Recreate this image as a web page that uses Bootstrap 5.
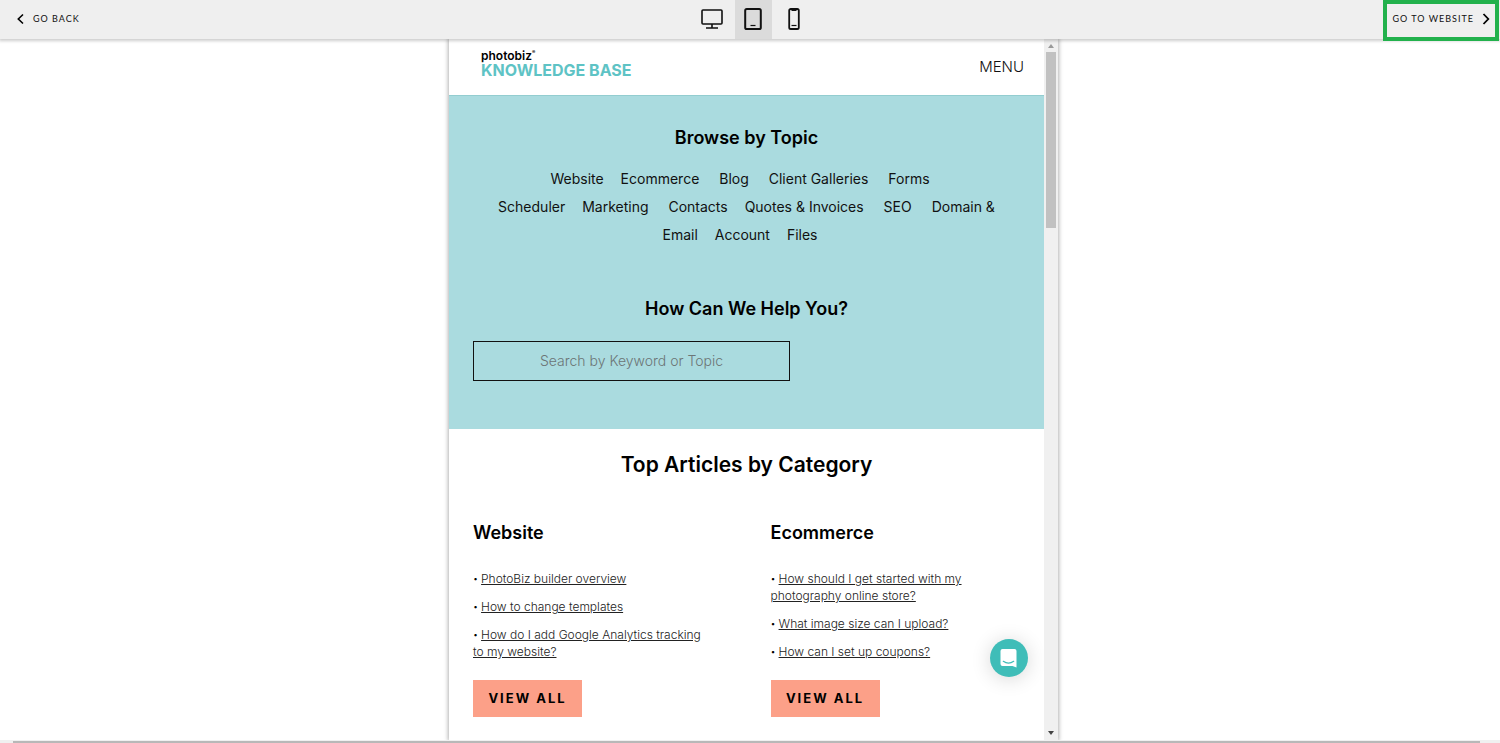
<!DOCTYPE html>
<html lang="en">
<head>
<meta charset="utf-8">
<meta name="viewport" content="width=device-width, initial-scale=1">
<title>Website preview</title>
<link rel="stylesheet" href="https://cdn.jsdelivr.net/npm/bootstrap@5.3.0/dist/css/bootstrap.min.css">
<style>
body { font-family: Inter, "Liberation Sans", sans-serif; color: #000; background: #fff; }
svg { display: block; }
.topbar { height: 39px; padding-left: 6px; background: #efefef; box-shadow: 0 1px 3px 1px rgba(0,0,0,.2); z-index: 5; }
.side-link { font: 400 9px/14px Lato, sans-serif; letter-spacing: 1px; color: #111; text-decoration: none; }
.back-link { padding: 0 0 2px 10px; }
.site-link { top: 0; right: 1px; height: 41px; border: 4px solid #22b14c; padding: 0 5px 4px 6px; }
.devices { gap: 4px; }
.device { width: 37px; height: 39px; border: 0; padding: 0 0 1px; background: none; }
.device.current { background: #dbdbdb; }
.stage { padding-left: 7px; }
.frame { width: 100%; max-width: 609px; box-shadow: 0 0 4px 1px rgba(0,0,0,.3); background: #fff; }
.site-head { height: 57px; padding: 0 20px 0 32px; border-bottom: 1px solid #93cdd0; }
.logo { color: #5ec3c5; text-decoration: none; padding-bottom: 7px; }
.logo-top { font: 600 12px/14px Inter, sans-serif; color: #000; }
.logo-top sup { font-size: 5px; top: -6px; }
.logo-main { font: 700 16px/15px Inter, sans-serif; }
.menu-btn { border: 0; background: none; padding: 0; font: 300 15px/20px Inter, sans-serif; color: #111; }
.hero { background: #aadbdf; padding: 28px 24px 48px; }
h2 { font-size: 18px; line-height: 28px; font-weight: 600; margin: 0; }
.topics { font-size: 14px; line-height: 28px; margin: 13px 0 46px; }
.topics a { color: #111; text-decoration: none; margin-right: 13px; }
.topics a.wide { margin-right: 16px; }
.search { width: 317px; height: 40px; margin-top: 18px; padding: 0 0 2px; border: 1px solid #111; background: none; text-align: center; font-size: 14px; font-weight: 300; }
.search::placeholder { color: #6c7576; }
.articles { padding: 21px 0; }
.articles h1 { font-size: 21px; line-height: 30px; font-weight: 600; margin: 0 0 39px; }
.topic-col { padding: 0 24px; }
.topic-col ul { font-size: 12px; line-height: 17px; font-weight: 300; margin: 23px 0 20px; padding-right: 12px; }
.topic-col li { margin-bottom: 11px; }
.topic-col li::before { content: "•"; font-size: 9px; line-height: 1; vertical-align: 1px; margin-right: 3px; }
.topic-col li a { color: #222; }
.view-btn { width: 109px; height: 37px; background: #fca088; border: 0; padding: 0; font-size: 13px; font-weight: 700; letter-spacing: 2px; color: #000; }
.track { width: 14px; background: #f0f0f0; padding: 5px 2px; }
.thumb { width: 10px; height: 176px; background: #c1c1c1; margin-top: 4px; }
.chat { right: 16px; bottom: 63px; width: 38px; height: 38px; border: 0; border-radius: 50%; background: #3fbdb8; box-shadow: 0 2px 20px rgba(0,0,0,.16); padding: 0; }
.page-scroll { height: 3px; background: #f0f0f0; padding: 1px 20px 0 13px; }
.page-scroll div { height: 2px; background: #b8b8b8; }
</style>
</head>
<body class="vh-100 d-flex flex-column overflow-hidden">
<header class="topbar position-relative d-flex align-items-center justify-content-center flex-shrink-0">
  <a href="#" class="side-link back-link me-auto d-flex align-items-center gap-2 w-25">
    <svg width="9" height="12" viewBox="0 0 9 12" fill="none" stroke="#000" stroke-width="1.6"><path d="M7 1.5 2.3 6 7 10.5"/></svg>GO BACK
  </a>
  <nav class="devices d-flex" aria-label="Preview device">
    <button class="device d-flex align-items-center justify-content-center" aria-label="Desktop">
      <svg width="22" height="20" viewBox="0 0 22 20" fill="none" stroke="#111" stroke-width="1.6"><rect x="1" y="1" width="20" height="14" rx="1"/><path d="M11 15v4M5 19h12"/></svg>
    </button>
    <button class="device current d-flex align-items-center justify-content-center" aria-label="Tablet">
      <svg width="18" height="22" viewBox="0 0 18 22" fill="none" stroke="#111" stroke-width="2"><rect x="1.2" y="1" width="15.6" height="20" rx="1.6"/><path d="M6.5 17.5h5" stroke-width="1.2"/></svg>
    </button>
    <button class="device d-flex align-items-center justify-content-center" aria-label="Phone">
      <svg width="12" height="22" viewBox="0 0 12 22" fill="none" stroke="#111" stroke-width="1.8"><rect x="1.2" y="1" width="9.6" height="20" rx="1.6"/><path d="M3.5 2h5" stroke-width="2"/><path d="M3.5 17.5h5" stroke-width="1.2"/></svg>
    </button>
  </nav>
  <div class="ms-auto w-25"></div>
  <a href="#" class="side-link site-link position-absolute d-flex align-items-center gap-2">GO TO WEBSITE
    <svg width="8" height="12" viewBox="0 0 8 12" fill="none" stroke="#000" stroke-width="1.8"><path d="M1.500 1 6.300 6 1.500 11"/></svg>
  </a>
</header>

<main class="stage flex-fill d-flex justify-content-center overflow-hidden">
  <div class="frame d-flex position-relative">
    <div class="flex-fill position-relative overflow-hidden">
      <div class="site-head d-flex align-items-center justify-content-between">
        <a href="#" class="logo"><div class="logo-top">photobiz<sup>®</sup></div><div class="logo-main">KNOWLEDGE BASE</div></a>
        <button class="menu-btn">MENU</button>
      </div>
      <section class="hero">
        <h2 class="text-center">Browse by Topic</h2>
        <div class="topics text-center">
          <a href="#">Website</a> <a href="#" class="wide">Ecommerce</a> <a href="#" class="wide">Blog</a> <a href="#" class="wide">Client Galleries</a> <a href="#">Forms</a><br>
          <a href="#">Scheduler</a> <a href="#" class="wide">Marketing</a> <a href="#">Contacts</a> <a href="#" class="wide">Quotes &amp; Invoices</a> <a href="#" class="wide">SEO</a> <a href="#">Domain &amp;<br>Email</a> <a href="#">Account</a> <a href="#">Files</a>
        </div>
        <h2 class="text-center"><label for="q">How Can We Help You?</label></h2>
        <input id="q" type="text" class="search d-block" placeholder="Search by Keyword or Topic">
      </section>
      <section class="articles">
        <h1 class="text-center">Top Articles by Category</h1>
        <div class="row g-0">
          <div class="col-6 topic-col">
            <h2>Website</h2>
            <ul class="list-unstyled">
              <li><a href="#">PhotoBiz builder overview</a></li>
              <li><a href="#">How to change templates</a></li>
              <li><a href="#">How do I add Google Analytics tracking to my website?</a></li>
            </ul>
            <button class="view-btn">VIEW ALL</button>
          </div>
          <div class="col-6 topic-col">
            <h2>Ecommerce</h2>
            <ul class="list-unstyled">
              <li><a href="#">How should I get started with my photography online store?</a></li>
              <li><a href="#">What image size can I upload?</a></li>
              <li><a href="#">How can I set up coupons?</a></li>
            </ul>
            <button class="view-btn">VIEW ALL</button>
          </div>
        </div>
      </section>
      <button class="chat position-absolute d-flex align-items-center justify-content-center" aria-label="Open chat">
        <svg width="18" height="20" viewBox="0 0 18 20"><path fill="#fff" d="M2.500 1h12A2 2 0 0 1 16.500 3v16.500L12.500 18h-10A2 2 0 0 1 .5 16V3a2 2 0 0 1 2-2z"/><path d="M3.300 13.300q5.200 3.800 10.400 0" fill="none" stroke="#3fbdb8" stroke-width="1.200" stroke-linecap="round"/></svg>
      </button>
    </div>
    <div class="track d-flex flex-column align-items-center flex-shrink-0" aria-hidden="true">
      <svg width="6" height="4" viewBox="0 0 6 4"><path d="M0 4 3 0l3 4z" fill="#999"/></svg>
      <div class="thumb"></div>
      <svg class="mt-auto" width="6" height="4" viewBox="0 0 6 4"><path d="M0 0h6L3 4z" fill="#444"/></svg>
    </div>
  </div>
</main>
<div class="page-scroll position-relative" aria-hidden="true"><div></div></div>
<script src="https://cdn.jsdelivr.net/npm/bootstrap@5.3.0/dist/js/bootstrap.bundle.min.js"></script>
</body>
</html>
